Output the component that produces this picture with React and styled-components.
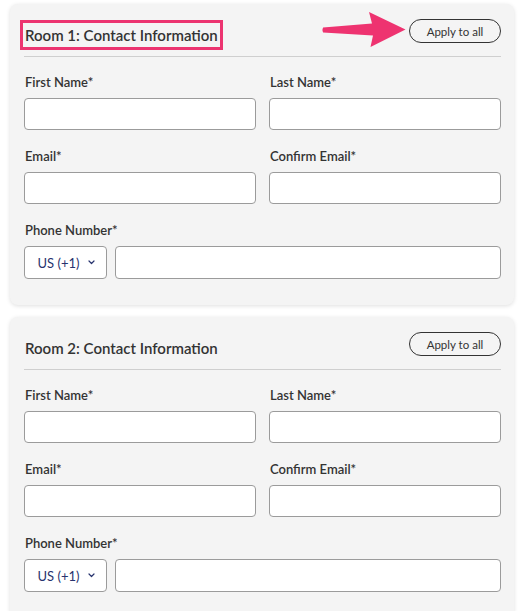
import React from "react";
import styled, { createGlobalStyle } from "styled-components";

const Global = createGlobalStyle`
  html, body { margin: 0; padding: 0; background: #ffffff; }
  body { font-family: "Lato", "Noto Sans", sans-serif; color: #333333; }
  * { box-sizing: border-box; }
`;

const Page = styled.div`
  display: flex;
  flex-direction: column;
  gap: 12px;
  padding: 4px 17px 0 10px;
  height: 611px;
  overflow: hidden;
`;

const Card = styled.section`
  position: relative;
  flex: 0 0 auto;
  background: #f4f4f4;
  border-radius: 8px;
  box-shadow: 0 1px 4px rgba(0, 0, 0, 0.13);
  padding: 15px 13px 26px 14px;
`;

const Header = styled.div`
  position: relative;
  display: flex;
  justify-content: space-between;
  align-items: flex-start;
  padding-bottom: 11px;
  border-bottom: 1px solid #cfcfcf;
`;

const Title = styled.h2`
  margin: 6px 0 0 1px;
  font-size: 15px;
  line-height: 20px;
  font-weight: 600;
  color: #333333;
  outline: ${(p) => (p.$highlight ? "3px solid #ec3470" : "none")};
  outline-offset: 2px;
`;

const ApplyButton = styled.button`
  width: 92px;
  height: 24px;
  border: 1.3px solid #333333;
  border-radius: 12px;
  background: transparent;
  font-family: "Lato", "Noto Sans", sans-serif;
  font-size: 11.5px;
  color: #333333;
  padding: 0;
  cursor: pointer;
`;

const Arrow = styled.svg`
  position: absolute;
  left: 299px;
  top: -7px;
  width: 84px;
  height: 36px;
  overflow: visible;
`;

const Form = styled.div`
  display: flex;
  flex-direction: column;
  gap: 18px;
  margin-top: 17px;
`;

const Row = styled.div`
  display: grid;
  grid-template-columns: 1fr 1fr;
  column-gap: 13px;
`;

const Field = styled.div`
  display: flex;
  flex-direction: column;
  gap: 8px;
`;

const Label = styled.label`
  font-size: 13px;
  line-height: 16px;
  font-weight: 600;
  color: #333333;
  padding-left: 1px;
`;

const Input = styled.input`
  height: ${(p) => p.$h || 32}px;
  width: 100%;
  border: 1px solid #9b9b9b;
  border-radius: 4px;
  background: #ffffff;
  font-family: "Lato", "Noto Sans", sans-serif;
  font-size: 13px;
  padding: 0 10px;
  outline: none;
`;

const PhoneRow = styled.div`
  display: flex;
  gap: 8px;
`;

const CountrySelect = styled.button`
  flex: 0 0 83px;
  height: 33px;
  display: flex;
  align-items: center;
  justify-content: center;
  gap: 9px;
  border: 1px solid #9b9b9b;
  border-radius: 4px;
  background: #ffffff;
  font-family: "Lato", "Noto Sans", sans-serif;
  font-size: 13px;
  color: #27336e;
  padding: 0 0 0 2px;
  cursor: pointer;
`;

const Chevron = () => (
  <svg width="7" height="5" viewBox="0 0 7 5" fill="none">
    <path d="M1 1 L3.5 3.5 L6 1" stroke="#27336e" strokeWidth="1.2" strokeLinecap="round" strokeLinejoin="round" />
  </svg>
);

function RoomCard({ room, annotated }) {
  return (
    <Card>
      <Header>
        <Title $highlight={annotated}>Room {room}: Contact Information</Title>
        {annotated && (
          <Arrow viewBox="0 0 84 36">
            <path
              d="M0 15.5 Q-1.2 18 0 20.5 L50 23.5 L47.5 35 L82.5 17.5 L46 0 L49 11.5 Z"
              fill="#ee3370"
            />
          </Arrow>
        )}
        <ApplyButton>Apply to all</ApplyButton>
      </Header>
      <Form>
        <Row>
          <Field>
            <Label>First Name*</Label>
            <Input />
          </Field>
          <Field>
            <Label>Last Name*</Label>
            <Input />
          </Field>
        </Row>
        <Row>
          <Field>
            <Label>Email*</Label>
            <Input />
          </Field>
          <Field>
            <Label>Confirm Email*</Label>
            <Input />
          </Field>
        </Row>
        <Field>
          <Label>Phone Number*</Label>
          <PhoneRow>
            <CountrySelect>
              US (+1) <Chevron />
            </CountrySelect>
            <Input $h={33} />
          </PhoneRow>
        </Field>
      </Form>
    </Card>
  );
}

export default function App() {
  return (
    <>
      <Global />
      <Page>
        <RoomCard room={1} annotated />
        <RoomCard room={2} />
      </Page>
    </>
  );
}
